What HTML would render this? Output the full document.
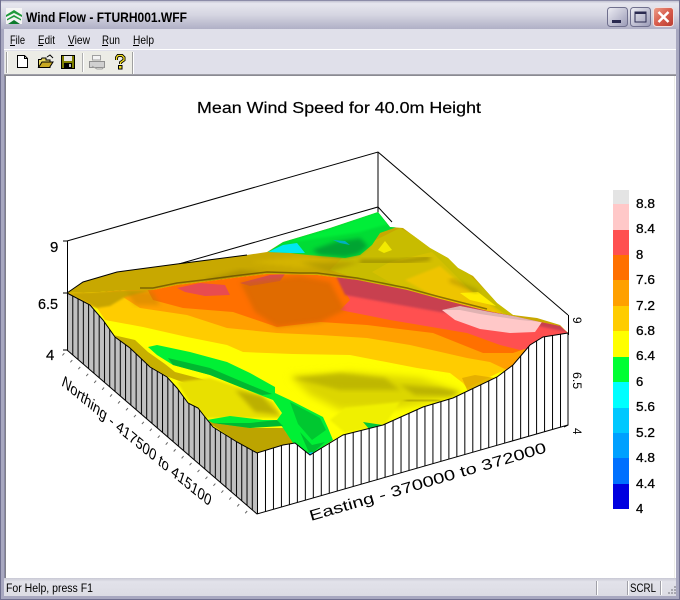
<!DOCTYPE html>
<html><head><meta charset="utf-8"><style>
html,body{margin:0;padding:0;background:#fff;overflow:hidden}
svg{display:block}
text{font-family:"Liberation Sans",sans-serif;fill:#000}
</style></head><body>
<svg width="680" height="600" viewBox="0 0 680 600" xmlns="http://www.w3.org/2000/svg">
<defs>
<linearGradient id="tb" x1="0" y1="0" x2="0" y2="1"><stop offset="0" stop-color="#b4b4c8"/><stop offset=".12" stop-color="#e6e6ee"/><stop offset=".5" stop-color="#d6d6e2"/><stop offset="1" stop-color="#b0b0c6"/></linearGradient>
<linearGradient id="btn" x1="0" y1="0" x2="1" y2="1"><stop offset="0" stop-color="#eeeef4"/><stop offset="1" stop-color="#9a9ab6"/></linearGradient>
<linearGradient id="cls" x1="0" y1="0" x2="1" y2="1"><stop offset="0" stop-color="#eca08c"/><stop offset=".5" stop-color="#d85c4c"/><stop offset="1" stop-color="#b83c30"/></linearGradient>
<linearGradient id="sb" x1="0" y1="0" x2="0" y2="1"><stop offset="0" stop-color="#c8c8d4"/><stop offset=".2" stop-color="#e2e2ea"/><stop offset="1" stop-color="#dcdce4"/></linearGradient>
<pattern id="wl" width="5.28" height="10" patternUnits="userSpaceOnUse" x="67" y="0"><rect width="5.28" height="10" fill="#c0c0c0"/><rect width="1" height="10" fill="#000"/></pattern>
<pattern id="wr" width="7.974" height="10" patternUnits="userSpaceOnUse" x="257" y="0"><rect width="7.974" height="10" fill="#fff"/><rect width="1" height="10" fill="#000"/></pattern>
<clipPath id="all"><path d="M67,293 83,282 117,272 177,264 247,255 267,252 283,242 330,228 378,212 390,227 403,228 430,248 448,258 458,268 473,276 497,303 513,315 537,318 560,325 568,333 543,337 530,345 513,365 497,377 453,398 423,407 383,425 343,435 310,455 295,443 283,445 257,453 237,442 213,427 205,417 198,408 188,403 177,388 167,377 150,367 130,348 115,337 103,320 90,305Z"/></clipPath>
<clipPath id="front"><path d="M67,293 100,292 127,290 153,290 177,285 203,282 233,278 267,274 317,275 357,280 407,290 440,299 487,311 513,316 540,322 560,326 568,333 543,337 530,345 513,365 497,377 453,398 423,407 383,425 343,435 310,455 295,443 283,445 257,453 237,442 213,427 205,417 198,408 188,403 177,388 167,377 150,367 130,348 115,337 103,320 90,305Z"/></clipPath>
<filter id="b1" x="-20%" y="-20%" width="140%" height="140%"><feGaussianBlur stdDeviation="1"/></filter>
<filter id="b2" x="-20%" y="-20%" width="140%" height="140%"><feGaussianBlur stdDeviation="2"/></filter>
<filter id="b4" x="-20%" y="-30%" width="140%" height="160%"><feGaussianBlur stdDeviation="4"/></filter>
</defs>

<!-- window frame -->
<rect width="680" height="600" fill="#8a8aa6"/>
<rect x="0" y="0" width="680" height="29" fill="url(#tb)"/>
<rect x="0" y="0" width="680" height="1" fill="#8c8ca8"/>
<rect x="4" y="29" width="672" height="21" fill="#e0e0ea"/>
<rect x="4" y="49" width="672" height="1" fill="#fff"/>
<rect x="4" y="50" width="672" height="24" fill="#e0e0ea"/>
<rect x="5" y="51" width="128" height="23" fill="#ecece6"/>
<rect x="4" y="74" width="672" height="1" fill="#a0a0a8"/>
<rect x="4" y="75" width="672" height="2" fill="#8a8a92"/>
<rect x="5" y="76" width="671" height="502" fill="#fff"/>
<rect x="5" y="76" width="1" height="502" fill="#808088"/>
<rect x="674" y="76" width="1" height="502" fill="#ecece6"/>
<rect x="4" y="578" width="672" height="18" fill="url(#sb)"/>
<rect x="0" y="0" width="1" height="600" fill="#707090"/>
<rect x="679" y="0" width="1" height="600" fill="#707090"/>
<rect x="0" y="599" width="680" height="1" fill="#707090"/>
<rect x="1" y="29" width="3" height="570" fill="#a8a8c0"/>
<rect x="676" y="29" width="3" height="570" fill="#a8a8c0"/>
<rect x="1" y="596" width="678" height="3" fill="#a8a8c0"/>

<!-- app icon -->
<rect x="6" y="8" width="16" height="16" fill="#f4f4f4"/>
<path d="M6,15 14,10 22,15 22,17 14,13 6,17Z" fill="#1f9a3c"/>
<path d="M7,19 14,15 21,19 21,20.500 14,17 7,20.500Z" fill="#1f9a3c"/>
<path d="M8,24 14,20 20,24Z" fill="#0c7a2c"/>
<text x="26" y="22" font-size="14" font-weight="bold" textLength="161" lengthAdjust="spacingAndGlyphs">Wind Flow - FTURH001.WFF</text>

<!-- window buttons -->
<rect x="607.500" y="7.500" width="20" height="19" rx="3" fill="url(#btn)" stroke="#70708e"/>
<rect x="612" y="20" width="9" height="3" fill="#2a2a50"/>
<rect x="630.500" y="7.500" width="20" height="19" rx="3" fill="url(#btn)" stroke="#70708e"/>
<rect x="635" y="12" width="11" height="10" fill="none" stroke="#2a2a50"/><rect x="635" y="12" width="11" height="2" fill="#2a2a50"/>
<rect x="653.500" y="7.500" width="20" height="19" rx="3" fill="url(#cls)" stroke="#f0e0e0"/>
<path d="M658.500,12 668.500,22 M668.500,12 658.500,22" stroke="#fff" stroke-width="2.500"/>

<!-- menu -->
<g font-size="12">
<text x="10" y="44" textLength="15" lengthAdjust="spacingAndGlyphs">File</text><rect x="10" y="45" width="5" height="1"/>
<text x="38" y="44" textLength="17" lengthAdjust="spacingAndGlyphs">Edit</text><rect x="38" y="45" width="5" height="1"/>
<text x="68" y="44" textLength="22" lengthAdjust="spacingAndGlyphs">View</text><rect x="68" y="45" width="6" height="1"/>
<text x="102" y="44" textLength="18" lengthAdjust="spacingAndGlyphs">Run</text><rect x="102" y="45" width="6" height="1"/>
<text x="133" y="44" textLength="21" lengthAdjust="spacingAndGlyphs">Help</text><rect x="133" y="45" width="6" height="1"/>
</g>

<!-- toolbar -->
<rect x="6" y="52" width="1" height="21" fill="#a0a0a0"/><rect x="7" y="52" width="1" height="21" fill="#fff"/>
<rect x="82" y="53" width="1" height="19" fill="#b0b0b0"/><rect x="83" y="53" width="1" height="19" fill="#fff"/>
<rect x="132" y="52" width="1" height="22" fill="#a0a0a0"/><rect x="133" y="52" width="1" height="22" fill="#fff"/>
<path d="M17.500,55.500H24.500L27.500,58.500V67.500H17.500Z" fill="#fff" stroke="#000"/><path d="M24.500,55.500V58.500H27.500" fill="none" stroke="#000"/>
<path d="M38.500,67.500V59.500H41L42,58H46V60H50V67.500Z" fill="#e8d860" stroke="#000"/>
<path d="M38.500,67.500 42,62H53L49.500,67.500Z" fill="#c8a820" stroke="#000"/>
<path d="M47,57 50,55 53,58" fill="none" stroke="#000"/>
<rect x="61.500" y="55.500" width="13" height="13" fill="#808000" stroke="#000"/>
<rect x="64" y="56" width="8" height="5" fill="#e8e8e8"/><rect x="64" y="63" width="8" height="5" fill="#000"/><rect x="69" y="64" width="2" height="3" fill="#c0c0c0"/>
<path d="M92.500,55.500H100.500V60H92.500Z" fill="#f4f4f4" stroke="#a0a0a0"/>
<path d="M89.500,61.500H104.500V67.500H89.500Z" fill="#d0d0d0" stroke="#909090"/>
<path d="M92,66 97,69H102L104,67" fill="none" stroke="#a0a0a0"/>
<path d="M116.500,60V57.500L118,55.500H122L124,57.500V60L120.500,62.500V64" fill="none" stroke="#000" stroke-width="3"/>
<path d="M116.500,60V57.500L118,55.500H122L124,57.500V60L120.500,62.500V64" fill="none" stroke="#f4e020" stroke-width="1.300"/>
<rect x="118.500" y="65.500" width="3.500" height="3.500" fill="#f4e020" stroke="#000" stroke-width="1"/>

<!-- title -->
<text x="197" y="113" font-size="15.500" textLength="284" lengthAdjust="spacingAndGlyphs" stroke="#000" stroke-width=".2">Mean Wind Speed for 40.0m Height</text>

<!-- box -->
<g fill="none" stroke="#000" stroke-width="1">
<path d="M67,241 378,152 568,315"/>
<path d="M378,152V213"/>
<path d="M67,296 378,207 392,222"/>
<path d="M67.500,241V295"/>
<path d="M568.500,315V335"/>
<path d="M63,241H67M63,293H67M63,350H67"/>
<path d="M568,371 564,369M568,425 564,427"/>
</g>

<!-- walls -->
<path d="M67,293 90,305 103,320 115,337 130,348 150,367 167,377 177,388 188,403 198,408 205,417 213,427 237,442 257,453 257,514 67,350Z" fill="url(#wl)"/>
<path d="M257,453 283,445 295,443 310,455 343,435 383,425 423,407 453,398 497,377 513,365 530,345 543,337 568,333 568,425 257,514Z" fill="url(#wr)"/>
<path d="M67,350 257,514 568,425 568,333" fill="none" stroke="#000"/>
<path d="M63,354 253,518" stroke="#000" stroke-width="3" stroke-dasharray="1 9.500" opacity=".6" fill="none"/>

<!-- back surface -->
<g clip-path="url(#all)">
<rect x="60" y="200" width="520" height="150" fill="#c8a800"/>
<!-- right back yellowish -->
<path d="M330,270 345,255 400,228 440,250 470,275 500,305 530,325 440,305 400,292Z" fill="#c8bc00"/>
<path d="M390,262 432,252 470,290 505,314 440,300 400,288 372,272Z" fill="#d4c000"/>
<path d="M405,280 440,266 462,285 480,298 505,316 440,300Z" fill="#eec400" filter="url(#b1)"/>
<path d="M460,293 478,292 496,306 470,300Z" fill="#ffee00"/>
<path d="M378,250 385,241 392,250 384,253Z" fill="#f2ea00"/>
<path d="M360,262 400,262 430,258" stroke="#6a5a00" stroke-width="4" opacity=".5" filter="url(#b2)" fill="none"/>
<path d="M450,280 478,292" stroke="#6a5a00" stroke-width="3" opacity=".4" filter="url(#b2)" fill="none"/>
<!-- greens -->
<path d="M268,252 283,242 330,228 378,212 390,226 397,227 380,233 372,245 360,255 345,258 307,255 290,253Z" fill="#00dc34"/>
<path d="M285,243 330,229 378,212 388,224 360,232 320,238Z" fill="#00ee38" filter="url(#b1)"/>
<path d="M312,250 335,242 360,238 368,246 358,254 345,257 320,255Z" fill="#00a430" filter="url(#b2)"/>
<path d="M268,252 283,245 297,243 305,253 290,253Z" fill="#00e8f0"/>
<path d="M333,240 345,241 350,245 340,243Z" fill="#00b0c0"/>
<!-- gold highlights -->
<path d="M205,280 240,270 265,272 210,284Z" fill="#9a8000" opacity=".5" filter="url(#b2)"/>
<path d="M250,262 300,256 350,262 300,268Z" fill="#d4b400" filter="url(#b2)"/>
<path d="M300,262 360,262 330,272Z" fill="#a89400" opacity=".6" filter="url(#b2)"/>
<path d="M140,288 153,288 177,283 203,280 233,276 267,272 300,273 317,273 357,278 407,288 440,297 487,309" fill="none" stroke="#4e3800" stroke-width="1.500" opacity=".6"/>
</g>

<!-- front surface -->
<g clip-path="url(#front)">
<rect x="60" y="270" width="520" height="200" fill="#ffff00"/>
<path d="M60,296 97,308 105,320 143,327 187,337 227,345 243,352 293,354 350,355 417,368 450,373 463,383 467,388 500,372 580,360V200H60Z" fill="#ffcc00"/>
<path d="M100,290 123,297 140,308 187,315 227,328 277,333 320,335 367,338 410,345 467,358 490,362 507,370 580,330V200H100Z" fill="#ffa000"/>
<path d="M145,285 153,300 183,308 233,312 277,327 320,322 367,325 433,333 483,353 513,353 580,330V200H145Z" fill="#ff7000"/>
<path d="M333,270 350,300 340,310 390,320 467,333 500,345 520,350 580,340V200H333Z" fill="#ff5050"/>
<path d="M333,270 345,295 400,305 440,312 520,322 580,335V200H333Z" fill="#c84050" filter="url(#b1)"/>
<path d="M442,310 460,306 490,312 525,318 542,322 535,332 510,333 480,329 455,320Z" fill="#ffc8c8"/>
<path d="M442,310 460,306 490,312 525,318 542,322 520,320 480,314 460,310Z" fill="#b09090" opacity=".4"/>
<!-- red patches left -->
<path d="M177,288 200,283 225,285 230,295 205,296 185,292Z" fill="#e84c50"/>
<path d="M240,283 270,275 285,274 280,281 250,286Z" fill="#d84c50"/>
<!-- dim orange -->
<path d="M240,282 300,276 330,282 345,310 320,322 277,327 255,312Z" fill="#cc6800" opacity=".6" filter="url(#b2)"/>
<!-- left dim gold -->
<path d="M67,293 127,290 153,290 125,297 110,306 97,308Z" fill="#c8a400" filter="url(#b1)"/>
<path d="M127,292 153,292 160,305 135,305Z" fill="#c08000" opacity=".45" filter="url(#b2)"/>
<!-- lower shading -->
<path d="M113,335 135,340 148,352 165,364 175,372 213,382 190,385 150,370 125,345Z" fill="#c8b000"/>
<path d="M177,382 210,378 240,388 273,402 282,418 250,418 205,418 188,400Z" fill="#e8e000" filter="url(#b1)"/>
<path d="M235,390 262,396 280,415 255,412Z" fill="#bcb000" filter="url(#b2)"/>
<path d="M205,420 250,428 283,428 300,445 257,453 237,442Z" fill="#bca400"/>
<path d="M283,412 300,440 295,443 285,432Z" fill="#dca000"/>
<!-- olive ellipse, right -->
<path d="M290,376 350,372 420,378 462,392 445,400 400,408 340,410 310,395Z" fill="#dcd600" filter="url(#b4)"/>
<path d="M292,378 340,373 385,378 400,390 340,390Z" fill="#b0a800" opacity=".65" filter="url(#b2)"/>
<path d="M400,385 440,388 460,392 450,396 415,395Z" fill="#bcb400" filter="url(#b2)"/>
<path d="M405,401 440,400" stroke="#7a6800" stroke-width="3" opacity=".7" filter="url(#b2)" fill="none"/>
<path d="M462,378 475,375 495,378 468,392Z" fill="#e0a800" opacity=".8"/>
<path d="M330,420 345,408 400,402 385,425 345,433Z" fill="#f0f000" filter="url(#b1)"/>
<!-- green bands -->
<path d="M157,345 190,352 227,362 250,373 275,387 275,393 290,400 323,417 328,428 333,440 310,455 293,443 283,428 277,420 250,428 213,423 207,420 230,416 263,420 277,420 282,413 273,400 260,395 240,387 210,375 173,365 157,355 148,347Z" fill="#00f035"/>
<path d="M168,358 210,368 250,385 272,394 262,395 240,387 210,375 173,365Z" fill="#00b830"/>
<path d="M290,402 320,418 326,430 312,440 298,424Z" fill="#00c830"/>
<path d="M213,423 250,423 277,420 283,426 250,428Z" fill="#00b830"/>
<path d="M300,432 312,445 325,442 310,455Z" fill="#00c030"/>
<path d="M363,422 383,425 370,430Z" fill="#00c838"/>
<path d="M308,453 313,452 311,456Z" fill="#00c8ff"/>
</g>
<path d="M67,293 90,305 103,320 115,337 130,348 150,367 167,377 177,388 188,403 198,408 205,417 213,427 237,442 257,453 283,445 295,443 310,455 343,435 383,425 423,407 453,398 497,377 513,365 530,345 543,337 568,333" fill="none" stroke="#000"/>
<path d="M67,293 83,282 117,272 177,264 247,255" fill="none" stroke="#000"/>

<!-- axis labels -->
<g font-size="15" stroke="#000" stroke-width=".2">
<text x="50" y="252">9</text>
<text x="38" y="309" textLength="20" lengthAdjust="spacingAndGlyphs">6.5</text>
<text x="46" y="360">4</text>
</g>
<g font-size="13">
<text transform="translate(573,317) rotate(90) scale(.9,.9)" x="0" y="0">9</text>
<text transform="translate(573,372) rotate(90) scale(.95,.9)" x="0" y="0">6.5</text>
<text transform="translate(573,428) rotate(90) scale(.9,.9)" x="0" y="0">4</text>
</g>
<text transform="matrix(.78,.64,-.32,.95,61,385)" font-size="15" textLength="190" lengthAdjust="spacingAndGlyphs">Northing  -  417500 to 415100</text>
<text transform="matrix(.96,-.28,.28,.96,311,521)" font-size="15" textLength="246" lengthAdjust="spacingAndGlyphs">Easting  -  370000 to 372000</text>

<!-- legend -->
<rect x="613" y="190" width="16" height="14" fill="#e4e4e4"/>
<rect x="613" y="204" width="16" height="26" fill="#ffc8c8"/>
<rect x="613" y="230" width="16" height="25" fill="#ff5050"/>
<rect x="613" y="255" width="16" height="25" fill="#ff7000"/>
<rect x="613" y="280" width="16" height="26" fill="#ffa000"/>
<rect x="613" y="306" width="16" height="25" fill="#ffcc00"/>
<rect x="613" y="331" width="16" height="26" fill="#ffff00"/>
<rect x="613" y="357" width="16" height="25" fill="#00ff33"/>
<rect x="613" y="382" width="16" height="26" fill="#00ffff"/>
<rect x="613" y="408" width="16" height="25" fill="#00c8ff"/>
<rect x="613" y="433" width="16" height="25" fill="#00a0ff"/>
<rect x="613" y="458" width="16" height="26" fill="#0070ff"/>
<rect x="613" y="484" width="16" height="25" fill="#0000e0"/>
<g font-size="13" stroke="#000" stroke-width=".3">
<text x="636" y="208" textLength="19" lengthAdjust="spacingAndGlyphs">8.8</text>
<text x="636" y="233" textLength="19" lengthAdjust="spacingAndGlyphs">8.4</text>
<text x="636" y="259">8</text>
<text x="636" y="284" textLength="19" lengthAdjust="spacingAndGlyphs">7.6</text>
<text x="636" y="310" textLength="19" lengthAdjust="spacingAndGlyphs">7.2</text>
<text x="636" y="335" textLength="19" lengthAdjust="spacingAndGlyphs">6.8</text>
<text x="636" y="360" textLength="19" lengthAdjust="spacingAndGlyphs">6.4</text>
<text x="636" y="386">6</text>
<text x="636" y="411" textLength="19" lengthAdjust="spacingAndGlyphs">5.6</text>
<text x="636" y="437" textLength="19" lengthAdjust="spacingAndGlyphs">5.2</text>
<text x="636" y="462" textLength="19" lengthAdjust="spacingAndGlyphs">4.8</text>
<text x="636" y="488" textLength="19" lengthAdjust="spacingAndGlyphs">4.4</text>
<text x="636" y="513">4</text>
</g>

<!-- status -->
<text x="6" y="592" font-size="11.500" textLength="87" lengthAdjust="spacingAndGlyphs">For Help, press F1</text>
<rect x="597" y="581" width="1" height="14" fill="#fff"/><rect x="596" y="581" width="1" height="14" fill="#a0a0a8"/>
<rect x="627" y="581" width="1" height="14" fill="#a0a0a8"/><rect x="628" y="581" width="1" height="14" fill="#fff"/>
<rect x="661" y="581" width="1" height="14" fill="#fff"/><rect x="660" y="581" width="1" height="14" fill="#a0a0a8"/>
<text x="630" y="592" font-size="11.500" textLength="26" lengthAdjust="spacingAndGlyphs">SCRL</text>
<g fill="#a8a8b0"><rect x="674" y="586" width="2" height="2"/><rect x="671" y="589" width="2" height="2"/><rect x="674" y="589" width="2" height="2"/><rect x="668" y="592" width="2" height="2"/><rect x="671" y="592" width="2" height="2"/><rect x="674" y="592" width="2" height="2"/></g>
</svg>
</body></html>
